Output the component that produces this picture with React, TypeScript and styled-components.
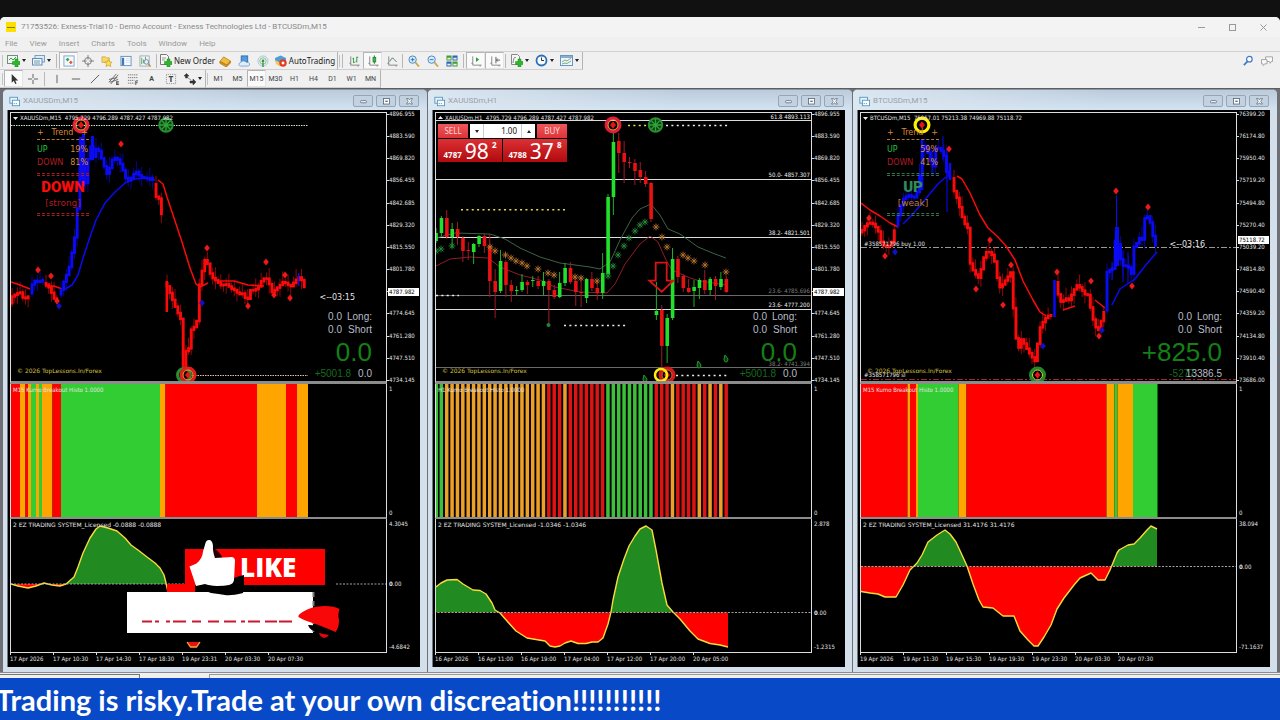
import React from 'react';
import styled, { createGlobalStyle, css } from 'styled-components';

const GlobalStyle = createGlobalStyle`
  * { box-sizing: border-box; }
  body { margin: 0; background: #111; }
  button, input { font: inherit; color: inherit; margin: 0; padding: 0; border: 0; background: none; }
`;

const ui = `"Noto Sans", "Open Sans", sans-serif`;
const caption = `Roboto, "Noto Sans", sans-serif`;
const chartFont = `"DejaVu Sans Condensed", "DejaVu Sans", sans-serif`;
const wide = `"DejaVu Sans", sans-serif`;
const arial = `"Liberation Sans", Arial, sans-serif`;

/* ---------- application shell ---------- */

const Page = styled.div`
  display: flex;
  flex-direction: column;
  min-height: 100vh;
  padding-top: 17px;
  background: #111;
  overflow: hidden;
`;

const AppWindow = styled.div`
  flex: 1;
  display: flex;
  flex-direction: column;
  background: #f0f0f0;
  border-radius: 5px 5px 0 0;
  font: 8px/12px ${ui};
  color: #222;
`;

const TitleBar = styled.header`
  display: flex;
  align-items: center;
  gap: 5px;
  height: 20px;
  padding: 0 12px 0 6px;
  background: #f3f3f3;
  border-radius: 5px 5px 0 0;
  color: #8a8a8a;
`;

const AppTitle = styled.h1`
  flex: 1;
  margin: 0;
  font: 8px/12px ${caption};
  white-space: nowrap;
`;

const AppLogo = styled.span`
  display: grid;
  place-items: center;
  width: 10px;
  height: 10px;
  background: #fbe000;
  &::after {
    content: '';
    width: 8px;
    height: 1px;
    background: #8f7a00;
  }
`;

const CaptionButtons = styled.div`
  display: flex;
  gap: 21px;
`;

const CaptionButton = styled.button`
  display: grid;
  place-items: center;
  width: 10px;
  height: 12px;
`;

const MenuBar = styled.nav`
  display: flex;
  gap: 12px;
  height: 15px;
  padding: 0 5px;
  border-bottom: 1px solid #d2d2d2;
  color: #999;
  font: 8px/14px ${caption};
  a { color: inherit; text-decoration: none; }
`;

const ToolRow = styled.div`
  display: flex;
  align-items: center;
  height: 18px;
  padding-right: 4px;
`;

const ToolGroup = styled.div`
  display: flex;
  align-items: center;
  height: 18px;
  padding-left: 4px;
  border-right: 1px solid #b4b4b4;
  border-bottom: 1px solid #cfcfcf;
  background: linear-gradient(#c4c4c4, #c4c4c4) 2px 3px / 1px 12px no-repeat;
  & + & { padding-left: 3px; background-position: 1px 3px; }
`;

const Spacer = styled.div`
  flex: 1;
`;

const Tool = styled.button<{ $w?: number; $on?: boolean }>`
  display: flex;
  flex: none;
  align-items: center;
  justify-content: center;
  gap: 2px;
  width: ${(p) => p.$w ?? 19}px;
  height: 17px;
  white-space: nowrap;
  ${(p) =>
    p.$on &&
    css`
      background: #fafafa;
      border: 1px solid #b4b4b4;
      border-right-color: #e4e4e4;
      border-bottom-color: #e4e4e4;
    `}
`;

const Period = styled(Tool)`
  font: 7px/12px ${caption};
  color: #444;
`;

const Divider = styled.span<{ $w?: number }>`
  flex: none;
  width: ${(p) => p.$w ?? 5}px;
  height: 14px;
  background: linear-gradient(#b8b8b8, #b8b8b8) center / 1px 100% no-repeat;
`;

const Caret = styled.span`
  border: 2px solid transparent;
  border-top: 3px solid #222;
  border-bottom: 0;
`;

/* ---------- chart windows ---------- */

const Workspace = styled.main`
  flex: 1;
  display: grid;
  grid-template-columns: repeat(3, minmax(0, 1fr));
  column-gap: 1px;
  padding: 0 3px;
  background: #6e7076;
  border-top: 1px solid #5a5d61;
`;

const ChartWindow = styled.section`
  display: flex;
  flex-direction: column;
  padding: 0 7px 5px 5px;
  background: #d3e0ec;
  border-top: 1px solid #8d979f;
  border-radius: 5px 5px 0 0;
`;

const ChartTitle = styled.header`
  display: flex;
  align-items: center;
  gap: 3px;
  height: 20px;
  margin: 0 -7px 0 -5px;
  padding: 2px 8px 0 6px;
  border-radius: 4px 4px 0 0;
  background: linear-gradient(90deg, #dbe7f1, rgba(219, 231, 241, 0) 60%), linear-gradient(#bccbdc, #d3e3f1);
  h2 {
    flex: 1;
    margin: 0;
    font: 8px/12px ${caption};
    color: #97a0a8;
  }
`;

const FrameButton = styled.button`
  display: grid;
  place-items: center;
  width: 20px;
  height: 12px;
  background: #c3d2e1;
  border: 1px solid #97a5b3;
  border-radius: 2px;
`;

const ChartBody = styled.div`
  flex: 1;
  display: grid;
  grid-template-columns: minmax(0, 1fr) 33px;
  grid-template-rows: 274fr 135fr 134fr 14px;
  min-height: 557px;
  padding-left: 2px;
  background: #000;
  color: #e4e4e4;
  font: 6px/8px ${chartFont};
  box-shadow: -1px 0 0 #6c7a86;
`;

const Plot = styled.div<{ $kind: 'price' | 'histo' | 'ez' }>`
  position: relative;
  min-height: 0;
  border-left: 1px solid #ddd;
  border-right: 1px solid #ddd;
  ${(p) => p.$kind === 'price' && 'margin-top: 2px; border-top: 1px solid #ddd; border-bottom: 3px solid #8c8c8c;'}
  ${(p) => p.$kind === 'histo' && 'border-bottom: 2px solid #8c8c8c;'}
  ${(p) => p.$kind === 'ez' && 'border-bottom: 1px solid #ddd;'}
`;

const Canvas = styled.svg`
  position: absolute;
  inset: 0;
  display: block;
  width: 100%;
  height: 100%;
`;

const Axis = styled.div<{ $low?: boolean }>`
  position: relative;
  display: flex;
  flex-direction: column;
  justify-content: space-between;
  padding: ${(p) => (p.$low ? '1px 0 2px 2px' : '0 0 0 2px')};
  white-space: nowrap;
`;

const Tick = styled.span`
  &::before {
    content: '';
    float: left;
    width: 2px;
    height: 1px;
    margin: 4px 0 0 -2px;
    background: #ddd;
  }
`;

const AxisMark = styled.span<{ $top: number; $boxed?: boolean }>`
  position: absolute;
  top: ${(p) => p.$top}px;
  left: 1px;
  padding: 0 1px;
  ${(p) => p.$boxed && 'background: #fff; color: #000; width: 31px;'}
`;

const Dates = styled.div`
  grid-column: 1 / -1;
  display: flex;
  padding-top: 1px;
`;

const DateLabel = styled.span`
  position: relative;
  flex: 0 0 43px;
  line-height: 10px;
  white-space: nowrap;
  &::before {
    content: '';
    position: absolute;
    left: 0;
    top: -1px;
    width: 1px;
    height: 2px;
    background: #ddd;
  }
`;

const QuoteCaption = styled.p`
  position: absolute;
  top: 1px;
  left: 9px;
  margin: 0;
  white-space: pre;
`;

const PlotCaption = styled.p<{ $wide?: boolean }>`
  position: absolute;
  top: 2px;
  left: 2px;
  margin: 0;
  white-space: pre;
  ${(p) => p.$wide && `font-family: ${wide};`}
`;

const Copyright = styled.p`
  position: absolute;
  left: 6px;
  bottom: 6px;
  margin: 0;
  font-family: ${wide};
  color: #d4c040;
`;

const Countdown = styled.p<{ $top: number }>`
  position: absolute;
  top: ${(p) => p.$top}px;
  right: 31px;
  margin: 0;
  font: 8px/10px ${wide};
`;

const OrderNote = styled.p<{ $top: number }>`
  position: absolute;
  left: 3px;
  top: ${(p) => p.$top}px;
  margin: 0;
`;

const LevelLabel = styled.p<{ $top: number; $dim?: boolean }>`
  position: absolute;
  right: 1px;
  top: ${(p) => p.$top}px;
  margin: 0;
  color: ${(p) => (p.$dim ? '#7d7d7d' : '#eee')};
`;

const Positions = styled.div`
  position: absolute;
  right: 14px;
  bottom: 2px;
  display: flex;
  flex-direction: column;
  align-items: flex-end;
  font: 10px/13px ${arial};
  color: #b9bcc8;
`;

const PositionRow = styled.div`
  display: flex;
  gap: 5px;
  white-space: nowrap;
  span + span { width: 25px; text-align: right; }
`;

const BigProfit = styled.strong`
  font: 26px/32px ${arial};
  color: #148014;
`;

const ProfitRow = styled.div`
  display: flex;
  gap: 7px;
  line-height: 11px;
`;

const SmallProfit = styled.span<{ $overlap?: boolean }>`
  color: #176b1f;
  ${(p) => p.$overlap && 'margin-right: -16px;'}
`;

/* ---------- trend panel ---------- */

const Trend = styled.div`
  position: absolute;
  left: 26px;
  top: 13px;
  width: 52px;
  display: flex;
  flex-direction: column;
  font: 8px/13px ${wide};
  color: #d98a35;
`;

const TrendRow = styled.div<{ $tone?: string }>`
  display: flex;
  justify-content: space-between;
  padding-right: 1px;
  b { font-weight: 400; color: ${(p) => p.$tone ?? 'inherit'}; }
`;

const Dashes = styled.div<{ $tone: string; $double?: boolean }>`
  height: ${(p) => (p.$double ? 3 : 1)}px;
  margin: ${(p) => (p.$double ? '4px 0 0' : '0 0 3px')};
  border: 1px dashed ${(p) => p.$tone};
  border-width: ${(p) => (p.$double ? '1px 0' : '1px 0 0')};
`;

const Verdict = styled.strong<{ $tone: string }>`
  padding-top: 1px;
  text-align: center;
  font: 900 15px/20px Roboto, ${chartFont};
  color: ${(p) => p.$tone};
`;

const Strength = styled.span<{ $tone: string }>`
  text-align: center;
  font-size: 9px;
  line-height: 12px;
  color: ${(p) => p.$tone};
`;

/* ---------- one-click trade panel ---------- */

const TradePanel = styled.form`
  position: absolute;
  left: 2px;
  top: 11px;
  width: 129px;
  display: grid;
  grid-template-columns: 1fr 1fr;
  gap: 1px;
  color: #fff;
`;

const TradeTop = styled.div`
  grid-column: 1 / -1;
  display: grid;
  grid-template-columns: 30px 1fr 30px;
  column-gap: 2px;
  height: 14px;
`;

const SideButton = styled.button`
  background: linear-gradient(#f0575a, #dd3438);
  font: 8px/14px ${ui};
  color: #fbd9d9;
`;

const Volume = styled.div`
  display: grid;
  grid-template-columns: 13px 1fr 13px;
  background: #fff;
  color: #111;
  button { display: grid; place-items: center; }
  input {
    min-width: 0;
    padding-right: 4px;
    text-align: right;
    font: 8px/12px ${ui};
    border: solid #ccc;
    border-width: 0 1px;
  }
`;

const UpCaret = styled(Caret)`
  border-top: 0;
  border-bottom: 3px solid #222;
`;

const Quote = styled.button`
  display: flex;
  justify-content: center;
  align-items: flex-end;
  gap: 3px;
  height: 23px;
  background: linear-gradient(#dd3034, #b00a0e);
  font: 700 8px/14px ${ui};
  big { font: 21px/22px ${ui}; }
  sup { align-self: flex-start; font: 700 8px/11px ${ui}; }
`;

/* ---------- like sticker ---------- */

const Sticker = styled.div`
  position: absolute;
  left: 116px;
  top: 19px;
  width: 220px;
`;

const LikeButton = styled.button`
  display: block;
  width: 140px;
  height: 36px;
  margin: 11px 0 0 58px;
  padding-left: 55px;
  background: #fe0000;
  color: #fff;
  text-align: left;
  font: 800 26px/36px "Open Sans", ${ui};
`;

const WhiteCard = styled.div`
  width: 186px;
  height: 41px;
  margin-top: 7px;
  background: #fff;
`;

const StickerArt = styled.svg`
  position: absolute;
  left: 0;
  top: 0;
  width: 220px;
  height: 110px;
`;

/* ---------- footer ---------- */

const TabStrip = styled.div`
  display: flex;
  align-items: flex-end;
  height: 6px;
  background: #f0f0f0;
  border-top: 1px solid #8a8d90;
  &::before, &::after {
    content: '';
    width: 139px;
    height: 3px;
    border: solid #777;
    border-width: 1px 1px 0 0;
  }
  &::after { flex: 1; border-width: 1px 0 0 1px; margin-left: 69px; border-color: #999; }
`;

const Banner = styled.footer`
  height: 42px;
  padding-top: 1px;
  overflow: hidden;
  background: #0849c8;
  color: #fff;
  font: 700 29px/42px Lato, sans-serif;
  font-variant-ligatures: none;
  white-space: nowrap;
  span { margin-left: -4px; }
`;

/* ---------- icons ---------- */

type IconName =
  | 'newChart' | 'profiles' | 'market' | 'cross' | 'navigator' | 'data' | 'tester' | 'order' | 'book' | 'vps'
  | 'signal' | 'auto' | 'bars' | 'candle' | 'line' | 'zoomIn' | 'zoomOut' | 'tile' | 'scroll' | 'shift'
  | 'indicator' | 'clock' | 'template' | 'search' | 'chat' | 'cursor' | 'plus' | 'vline' | 'hline' | 'trend'
  | 'channel' | 'fibo' | 'label' | 'arrows' | 'chartFile' | 'min' | 'max' | 'close';

const Plus = () => <path d="M8 5h3v2.500h2v3h-2V13H8v-2.500H5.500v-3H8z" fill="#2fb62f" stroke="#168a16" strokeWidth=".5" />;
const Axes = () => <path d="M3 1.500v9.500h9.500M1.500 9h1.500M11 12.500V11" fill="none" stroke="#777" strokeWidth=".9" />;

const shapes: Record<IconName, React.ReactNode> = {
  newChart: <><rect x=".5" y="1.500" width="10" height="8" fill="#eef6ee" stroke="#6f8f7c" /><path d="M2 6l2-2 2 2 3-3" stroke="#3c9a5a" fill="none" /><Plus /></>,
  profiles: <><rect x="3" y="1.500" width="9.500" height="6.500" fill="#dcebf8" stroke="#7ba0c0" /><rect x=".5" y="4.500" width="9.500" height="6.500" fill="#eef6fc" stroke="#5f8cb4" /><path d="M2 9h6M2 7h6" stroke="#79a" /></>,
  market: <><rect x="1" y="1" width="11" height="11" fill="#f4f9ff" stroke="#79a6cf" /><path d="M3 5l2-2 2 2-2 2z" fill="#2fa53a" /><path d="M6.500 8l2-2 2 2-2 2z" fill="#e3592b" /></>,
  cross: <><circle cx="6.500" cy="6.500" r="3.700" fill="none" stroke="#777" /><path d="M6.500 0v5M6.500 8v5M0 6.500h5M8 6.500h5" stroke="#777" /></>,
  navigator: <><path d="M1 2h4l1 1h3v5H1z" fill="#f5d86a" stroke="#c79c2c" strokeWidth=".7" /><path d="M8 5l1.300 2.500 2.700.3-2 1.900.6 2.800L8 11.200l-2.600 1.300.6-2.800-2-1.900 2.700-.3z" fill="#ffe04a" stroke="#c0962a" strokeWidth=".7" /></>,
  data: <><rect x="1" y="1.500" width="11" height="10" fill="#fff" stroke="#5c8fc2" /><path d="M2 3h2.500v8H2z" fill="#3c78b8" /><path d="M6 4h5M6 6h5M6 8h5" stroke="#bcd" strokeWidth=".7" /></>,
  tester: <><rect x="1" y="1" width="10" height="11" fill="#f3f8f3" stroke="#9ab" /><path d="M3 3v7M5 5v4M7 2v5" stroke="#4a9a63" /><circle cx="8" cy="7.500" r="2.500" fill="#dff0fb" stroke="#789" /><path d="M10 9.500l2.500 3" stroke="#b98a4a" strokeWidth="1.500" /></>,
  order: <><path d="M1.500.5h6l2 2v8h-8z" fill="#f7f7f7" stroke="#777" /><path d="M3 4h4M3 6h3" stroke="#999" /><Plus /></>,
  book: <><path d="M1 7l4-5 7.500 4.500-4 4.500z" fill="#f0bd3e" stroke="#b57f18" strokeWidth=".8" /><path d="M1 7v2l7 4 4.500-4.500v-2l-4 4.500z" fill="#d9982a" stroke="#a87212" strokeWidth=".8" /></>,
  vps: <><rect x="3.500" y="1" width="7" height="6.500" fill="#4e9be0" stroke="#2f6fb0" /><path d="M2.500 12q-1.500-.5-1.500-2t2-2q1.500-2 3.500-1.500T9 8q3-.5 3.500 1.500T11 12z" fill="#dfeefa" stroke="#6796c2" strokeWidth=".8" /></>,
  signal: <><circle cx="6.500" cy="6.500" r="1.500" fill="#2e9a40" /><circle cx="6.500" cy="6.500" r="3.500" fill="none" stroke="#7cc08a" /><circle cx="6.500" cy="6.500" r="5.500" fill="none" stroke="#a9c6d8" /><path d="M6.500 8v5" stroke="#2e9a40" strokeWidth="1.500" /></>,
  auto: <><path d="M1 4l5.500-2.500L12 4v3L6.500 10 1 7z" fill="#4f9ed8" /><path d="M1 6l5 2.500v4L2 10z" fill="#f0c75a" /><circle cx="9" cy="9" r="3.700" fill="#e03a20" /><rect x="7.700" y="7.700" width="2.600" height="2.600" fill="#fff" /></>,
  bars: <><Axes /><path d="M6 3v5.500M9.500 2v6M9.500 2.500h1.500M6 8h1.500M4.800 4H6M8.300 7h1.200" stroke="#2a9c3a" /></>,
  candle: <><Axes /><path d="M8 .5v9" stroke="#1b7a2a" /><rect x="6.500" y="2.500" width="3" height="5" fill="#35c24a" stroke="#1b7a2a" strokeWidth=".8" /></>,
  line: <><Axes /><path d="M4 7q3-6 5-2l2.500 2.500" stroke="#4a7a5a" fill="none" /></>,
  zoomIn: <><circle cx="5" cy="5" r="4" fill="#d7ecfb" stroke="#3f84c0" /><path d="M3 5h4M5 3v4" stroke="#2a72b8" /><path d="M8 8l4 4.500" stroke="#d0a848" strokeWidth="2" /></>,
  zoomOut: <><circle cx="5" cy="5" r="4" fill="#d7ecfb" stroke="#3f84c0" /><path d="M3 5h4" stroke="#2a72b8" /><path d="M8 8l4 4.500" stroke="#d0a848" strokeWidth="2" /></>,
  tile: <><path d="M.5.5H6V6H.5zM7 7h5.500v5.500H7z" fill="#3f9e34" /><path d="M7 .5h5.500V6H7zM.5 7H6v5.500H.5z" fill="#3567ae" /><path d="M1.500 4H5M8 4h3.500M1.500 10.500H5M8 10.500h3.500" stroke="#e8f2e8" strokeWidth="1.800" /></>,
  scroll: <><Axes /><path d="M6.500 2.500l3.500 2.500-3.500 2.500z" fill="#2aa53a" /></>,
  shift: <><Axes /><path d="M7.500 2v7M12 5.500H8M9.500 4L8 5.500 9.500 7" stroke="#555" fill="none" /></>,
  indicator: <><path d="M1.500.5h6l2 2v8h-8z" fill="#f7f7f7" stroke="#888" /><path d="M3 9c1-7 2-6 3-5" stroke="#777" fill="none" /><Plus /></>,
  clock: <><circle cx="6.500" cy="6.500" r="5" fill="#f4faff" stroke="#2d6fb5" strokeWidth="1.800" /><path d="M6.500 3.500v3h2.500" stroke="#333" fill="none" /></>,
  template: <><rect x=".5" y="1.500" width="12" height="10" fill="#eef5fb" stroke="#6a95bf" /><path d="M1 3h11" stroke="#6a95bf" strokeWidth="1.500" /><path d="M2 8l3-2 2 1 4-3M2 10l3-1 2 .5L11 7" stroke="#5a9a6a" fill="none" strokeWidth=".8" /></>,
  search: <><circle cx="8" cy="4.500" r="3" fill="#fff" stroke="#4177c4" strokeWidth="1.300" /><path d="M6 7l-4 4" stroke="#4177c4" strokeWidth="1.800" /></>,
  chat: <><path d="M5 2h7.500v5H11l-1 2-1-2H5z" fill="#fafafa" stroke="#a0a0a0" /><path d="M.5 5h6v4.500H4L2.500 11.500 2 9.500H.5z" fill="#fafafa" stroke="#a0a0a0" /></>,
  cursor: <path d="M4 1v9.500l2.300-2 1.500 3.500 1.500-.7-1.500-3.300H11z" fill="#333" />,
  plus: <path d="M6.500 1v4.500M6.500 7.500V12M1 6.500h4.500M7.500 6.500H12" stroke="#555" />,
  vline: <path d="M6.500 2v9" stroke="#555" />,
  hline: <path d="M2 6.500h9" stroke="#555" />,
  trend: <path d="M2 11l9-9" stroke="#555" />,
  channel: <><path d="M1 10L9 1M3 12l8-10M1 7l9-2M2 10l9-3" stroke="#555" strokeWidth=".9" /><path d="M9 9.500h3M9 11h2.500M9 12.500h3M9.500 9v4" stroke="#333" strokeWidth=".8" /></>,
  fibo: <><path d="M1 2h11M1 5h11M1 8h7M1 11h7" stroke="#777" strokeDasharray="1.500 .7" /><path d="M9.500 13V8.500H12M9.500 10.500h2" stroke="#333" fill="none" strokeWidth=".8" /></>,
  label: <rect x="1.500" y="1.500" width="10" height="10" fill="none" stroke="#888" strokeDasharray="1 1" />,
  arrows: <path d="M1 4l2.500-2.500L6 4H4.500v2h-2V4zM7 9h3V7l3 3-3 3v-2H7zM5 6l3 2" fill="#333" stroke="#333" strokeWidth=".5" />,
  chartFile: <><rect x="1" y="1.500" width="9" height="7" fill="#e8f2fa" stroke="#4f93bd" /><rect x="4" y="5" width="8.500" height="6.500" fill="#fff" stroke="#4f93bd" /><path d="M5.500 9h5" stroke="#4f93bd" strokeDasharray="1.500 1" /></>,
  min: <rect x="3" y="5.500" width="7" height="2.500" rx="1" fill="#fff" stroke="#5b6b7b" />,
  max: <><rect x="3" y="3" width="7" height="6.500" fill="#fff" stroke="#5b6b7b" /><rect x="5" y="5.500" width="3" height="1.500" fill="#5b6b7b" /></>,
  close: <path d="M3 3h2.300L6.500 4.700 7.700 3H10L8 6.300 10 9.500H7.700L6.500 7.900 5.300 9.500H3L5 6.300z" fill="#fff" stroke="#5b6b7b" strokeWidth=".9" />,
};

const Icon = ({ name, size = 12 }: { name: IconName; size?: number }) => (
  <svg width={size} height={size} viewBox="0 0 13 13" aria-hidden="true">{shapes[name]}</svg>
);

/* ---------- chart drawing ---------- */

type Pt = [number, number];
const BLUE = '#0a0af5';
const RED = '#fa0a0a';
const BAR = 2.69;

const toPath = (pts: Pt[]) => 'M' + pts.map((p) => p.join(' ')).join('L');

const yAt = (pts: Pt[], x: number) => {
  const i = pts.findIndex((p) => p[0] >= x);
  if (i <= 0) return i === 0 ? pts[0][1] : pts[pts.length - 1][1];
  const [x0, y0] = pts[i - 1];
  const [x1, y1] = pts[i];
  return y0 + ((y1 - y0) * (x - x0)) / (x1 - x0 || 1);
};

const DenseBars = ({ pts, color }: { pts: Pt[]; color: string }) => {
  const bars: React.ReactNode[] = [];
  const end = pts[pts.length - 1][0];
  for (let x = pts[0][0], i = 0; x <= end; x += BAR, i += 1) {
    const a = yAt(pts, x - BAR / 2);
    const b = yAt(pts, x + BAR / 2);
    const top = Math.min(a, b) - 1;
    const bottom = Math.max(a, b) + 1.5;
    const up = ((i * 7 + 3) % 5) * 2.4;
    const down = ((i * 5 + 1) % 4) * 2.6;
    bars.push(
      <g key={i}>
        <path d={`M${x} ${top - up}V${bottom + down}`} stroke={color} strokeWidth=".8" opacity=".75" />
        <rect x={x - 1.4} y={top} width="2.9" height={bottom - top} fill={color} />
      </g>,
    );
  }
  return <>{bars}</>;
};

const Average = ({ pts, color }: { pts: Pt[]; color: string }) => (
  <path d={toPath(pts)} fill="none" stroke={color} strokeWidth="1.500" strokeLinejoin="round" />
);

const Diamonds = ({ at, color }: { at: Pt[]; color: string }) => (
  <>{at.map(([x, y]) => <path key={`${x}-${y}`} d={`M${x} ${y - 3.5}l2.800 3.500-2.800 3.500-2.800-3.500z`} fill={color} />)}</>
);

const Target = ({ x, y, ring, inner }: { x: number; y: number; ring: string; inner?: string }) => (
  <g>
    <circle cx={x} cy={y} r="6.900" fill="none" stroke={ring} strokeWidth="3.200" />
    {inner && <circle cx={x} cy={y} r="5" fill="none" stroke={inner} strokeWidth="1" />}
    <path d={`M${x} ${y - 3.8}l3 3.800-3 3.800-3-3.800z`} fill="#e01818" />
  </g>
);

const GreenSeal = ({ x, y }: { x: number; y: number }) => (
  <g>
    <circle cx={x} cy={y} r="6.700" fill="#0d3d10" stroke="#259030" strokeWidth="2" />
    <path d={`M${x} ${y - 6}V${y + 6}M${x - 6} ${y}H${x + 6}M${x - 4} ${y - 4}L${x + 4} ${y + 4}M${x + 4} ${y - 4}L${x - 4} ${y + 4}`} stroke="#2fa23a" strokeWidth="1.300" />
  </g>
);

const goldPrice = (
  <>
    <path d="M11 125.500H308" stroke="#bfe8c8" strokeDasharray="1.500 1" />
    <path d="M190 375.500H308" stroke="#e8c0a0" strokeDasharray="1.500 1" />
    <Average color={RED} pts={[[11, 282], [20, 285], [30, 289]]} />
    <Average color={RED} pts={[[45, 286], [54, 286], [62, 289]]} />
    <Average color={BLUE} pts={[[65, 289], [72, 285], [78, 275], [84, 255], [90, 237], [96, 220], [105, 203], [115, 192], [125, 183], [135, 179], [145, 178], [155, 180]]} />
    <Average color={RED} pts={[[158, 180], [163, 184], [167, 197], [174, 218], [182, 242], [190, 268], [196, 284], [200, 287], [208, 283]]} />
    <Average color={RED} pts={[[218, 281], [234, 281], [248, 285], [264, 286]]} />
    <DenseBars color={RED} pts={[[12, 303], [14, 293], [18, 296], [20, 288], [23, 297], [27, 298], [30, 296]]} />
    <DenseBars color={BLUE} pts={[[32, 293], [34, 280], [40, 282], [43, 280]]} />
    <DenseBars color={RED} pts={[[46, 283], [50, 287], [54, 295], [57, 302], [59, 299]]} />
    <DenseBars color={BLUE} pts={[[61, 294], [64, 284], [68, 274], [72, 262], [74, 245], [77, 232], [79, 200], [80.5, 190], [82, 140], [84, 165], [86, 188], [89, 160], [92, 146], [95, 158], [98, 146], [101, 153], [105, 165], [109, 176], [112, 162], [115, 157], [120, 160], [125, 172], [128, 181], [132, 178], [137, 171], [142, 177], [148, 178], [152, 180], [155, 176]]} />
    <path d="M80.500 137V188M83.500 134V186M92.500 136V160" stroke={BLUE} strokeWidth="3" />
    <DenseBars color={RED} pts={[[156, 184], [156.5, 196], [160, 198], [161, 208], [164, 218]]} />
    <path d="M166.800 281V312" stroke={RED} strokeWidth="2.500" />
    <DenseBars color={RED} pts={[[167, 283], [170, 290], [175, 303], [180, 315], [182.5, 320], [184, 370], [186, 352], [190, 348], [192, 330], [197, 325], [199, 316], [200.5, 285], [203, 272], [206, 260], [208, 260], [210, 270], [213, 277], [218, 281], [222, 285], [228, 284], [232, 288], [236, 290], [240, 294], [245, 293], [248, 303], [251, 290], [256, 290], [260, 286], [263, 280], [267, 277], [270, 282], [273, 292], [277, 289], [281, 285], [285, 281], [288, 284], [292, 286], [296, 281], [300, 277], [303, 280], [306, 288]]} />
    <path d="M298.500 273V286" stroke={BLUE} strokeWidth="1.500" />
    <Diamonds color="#f01818" at={[[38, 270], [51, 276], [57, 301], [121, 144], [207, 248], [266, 262], [285, 275], [248, 306], [274, 295], [290, 298]]} />
    <Diamonds color="#1010c8" at={[[59, 306], [202, 303]]} />
    <Target x={81} y={125} ring="#e8203c" inner="#ffb030" />
    <GreenSeal x={166} y={125} />
    <circle cx="184" cy="375" r="6.500" fill="none" stroke="#259030" strokeWidth="3" />
    <Target x={188} y={375} ring="#e01c1c" inner="#ff9a30" />
  </>
);

const bitcoinPrice = (
  <>
    <path d="M861 247.500H1236" stroke="#8f9a90" strokeDasharray="6 2 2 2" />
    <path d="M861 379.500H1236" stroke="#a02838" strokeDasharray="6 2 2 2" />
    <Average color={RED} pts={[[861, 203], [870, 210], [880, 216], [890, 223], [898, 227]]} />
    <Average color={BLUE} pts={[[903, 224], [910, 217], [918, 208], [928, 196], [938, 184], [946, 177]]} />
    <Average color={RED} pts={[[957, 176], [962, 179], [970, 193], [980, 215], [988, 228], [997, 236], [1006, 246], [1015, 260], [1023, 281], [1033, 300], [1040, 312], [1046, 316]]} />
    <Average color={RED} pts={[[1063, 310], [1075, 306]]} />
    <Average color={RED} pts={[[1095, 300], [1105, 308]]} />
    <Average color={BLUE} pts={[[1112, 305], [1120, 289], [1135, 279], [1145, 266], [1157, 252]]} />
    <DenseBars color={RED} pts={[[862, 232], [866, 226], [870, 222], [875, 224], [880, 232], [883, 245], [890, 246], [894, 240], [896, 228]]} />
    <DenseBars color={BLUE} pts={[[898, 225], [900, 210], [903, 203], [905, 198], [908, 196], [911, 195], [915, 198], [919, 190], [922, 165], [923, 150], [926, 145], [930, 155], [934, 168], [937, 148], [941, 148], [945, 155], [947, 170], [950, 176]]} />
    <path d="M950 163V180M922 140V190" stroke={BLUE} strokeWidth="2.500" />
    <path d="M947 150V212M943 136V160M932 150V176" stroke={BLUE} />
    <DenseBars color={RED} pts={[[954, 178], [955, 190], [959, 200], [962, 212], [965, 222], [969, 228], [971, 262], [975, 272], [980, 278], [984, 262], [986, 252], [992, 252], [996, 262], [1000, 288], [1004, 284], [1008, 278], [1012, 272], [1014, 300], [1016, 330], [1019, 350], [1023, 338], [1026, 345], [1030, 352], [1034, 358], [1037, 362], [1040, 330], [1044, 322], [1048, 316], [1052, 315]]} />
    <path d="M1054.500 280V317" stroke={BLUE} strokeWidth="2.500" />
    <DenseBars color={RED} pts={[[1058, 282], [1060, 300], [1063, 302], [1067, 298], [1070, 300], [1075, 290], [1078, 285], [1082, 288], [1086, 294], [1090, 295], [1092, 310], [1095, 322], [1099, 332], [1102, 322], [1105, 312]]} />
    <DenseBars color={BLUE} pts={[[1107, 310], [1108, 272], [1112, 269], [1115, 268], [1117, 230], [1120, 250], [1123, 265], [1128, 266], [1131, 268], [1133, 275], [1134, 248], [1138, 243], [1141, 237], [1144, 240], [1146, 218], [1148, 215], [1151, 220], [1153, 232], [1157, 246]]} />
    <path d="M1116.500 195V230M1112 262V280M1123 250V282M1128 252V284" stroke={BLUE} />
    <path d="M1117 227V266" stroke={BLUE} strokeWidth="4" />
    <Diamonds color="#f01818" at={[[869, 218], [885, 256], [949, 149], [990, 240], [1011, 265], [976, 289], [1003, 305], [1057, 272], [1091, 281], [1116, 191], [1148, 207], [1132, 286], [1099, 336]]} />
    <Diamonds color="#1010c8" at={[[895, 252], [1043, 346], [1102, 330]]} />
    <Target x={922} y={125} ring="#ffee00" />
    <Target x={1037.500} y={375} ring="#1f8a28" inner="#d8d040" />
  </>
);

// [high, body top, body bottom, low, rising]
const hourly: [number, number, number, number, 0 | 1][] = [
  [228, 233, 241, 243, 1], [216, 218, 233, 236, 1], [210, 218, 237, 239, 0], [223, 229, 237, 248, 1], [222, 229, 237, 245, 0],
  [236, 238, 251, 262, 0], [242, 250, 251, 260, 0], [243, 244, 252, 264, 1], [235, 236, 244, 247, 1], [234, 236, 246, 253, 0],
  [234, 246, 281, 297, 0], [269, 281, 292, 318, 0], [250, 261, 291, 293, 1], [260, 262, 285, 297, 0], [280, 285, 291, 302, 0],
  [286, 290, 291, 295, 1], [274, 282, 290, 292, 1], [280, 282, 285, 294, 0], [276, 280, 281, 287, 1], [276, 281, 286, 289, 0],
  [272, 281, 286, 295, 1], [279, 281, 290, 323, 0], [285, 290, 297, 299, 0], [272, 283, 297, 298, 1], [263, 268, 283, 286, 1],
  [262, 268, 282, 284, 0], [277, 281, 292, 306, 0], [277, 292, 293, 307, 0], [278, 279, 298, 303, 1], [272, 279, 288, 291, 0],
  [282, 288, 293, 300, 0], [253, 273, 293, 299, 1], [194, 197, 274, 276, 1], [131, 142, 197, 215, 1], [133, 141, 153, 173, 0],
  [141, 153, 162, 183, 0], [157, 162, 163, 168, 0], [159, 163, 171, 185, 0], [162, 170, 177, 183, 0], [171, 177, 184, 187, 0],
  [182, 183, 219, 222, 0], [282, 311, 315, 320, 1], [305, 310, 346, 372, 0], [314, 318, 346, 363, 1], [248, 259, 318, 320, 1],
  [256, 259, 277, 283, 0], [274, 276, 288, 292, 0], [279, 288, 292, 293, 0], [280, 287, 291, 307, 1], [278, 280, 288, 299, 1],
  [270, 280, 290, 294, 0], [277, 279, 290, 295, 1], [276, 279, 286, 300, 0], [272, 279, 287, 290, 1], [276, 279, 292, 293, 0],
];
const HOUR = 5.375;

const Stars = ({ at, color }: { at: Pt[]; color: string }) => (
  <>
    {at.map(([x, y]) => (
      <path key={x} d={`M${x} ${y - 3.4}v6.800M${x - 3.4} ${y}h6.800M${x - 2.4} ${y - 2.4}l4.800 4.800M${x + 2.4} ${y - 2.4}l-4.800 4.800`} stroke={color} strokeWidth=".9" />
    ))}
  </>
);

const goldHourlyPrice = (
  <>
    <path d="M436 120.500H811M436 179.500H811M436 237.500H811M436 309.500H811" stroke="#dcdcdc" />
    <path d="M436 295.500H811M436 367.500H811" stroke="#6a6a6a" />
    <g strokeWidth="1.500">
      <path d="M461 209.700H566M628 125.500H650" stroke="#e8e050" strokeDasharray="2 3.370" />
      <path d="M436 295.500H459M564 325.500H626M666 125.500H728M676 375.500H728" stroke="#eee" strokeDasharray="2 3.370" />
    </g>
    <path d="M436 238L455 233L490 234L505 239L520 248L540 257L560 263L590 267L600 269L610 262L620 240L632 218L640 209L651 204L660 215L668 229L680 234L698 247L715 254L726 258" fill="none" stroke="#3d6347" />
    <path d="M436 266L450 259L470 257L488 258L500 267L520 275L540 280L555 287L580 292L607 293L615 284L625 264L640 244L650 236L658 242L666 260L672 270L690 278L700 281L726 285" fill="none" stroke="#8f1c2a" />
    {hourly.map(([high, top, bottom, low, rising], i) => {
      const x = 436 + i * HOUR;
      return (
        <g key={i}>
          <path d={`M${x} ${high}V${low}`} stroke={rising ? '#1fae2c' : '#a01828'} />
          <rect x={x - 1.7} y={top} width="3.600" height={bottom - top} fill={rising ? '#22e02c' : '#e81212'} />
        </g>
      );
    })}
    <Stars color="#b8732a" at={[[490, 247], [495, 251], [505.5, 255], [511, 258], [516, 261], [522, 263], [527, 266], [538, 269], [548, 273], [554, 275], [575, 277], [581, 278], [597, 281], [656, 227], [662, 237], [667, 247], [683, 255], [688, 258], [694, 261], [705, 265], [726, 272]]} />
    <Stars color="#258a38" at={[[436, 251], [441, 249], [452, 246], [608, 276], [613, 266], [618, 255], [624, 246], [629, 238], [635, 231], [640, 225], [645, 222]]} />
    <circle cx="548.500" cy="325" r="2" fill="#1f8a35" />
    <path d="M655.700 262.700h11v18h6.600l-11.600 11-12.400-11h6.400z" fill="none" stroke="#d81414" strokeWidth="1.800" />
    {[[699, 365], [726, 359], [645, 379]].map(([x, y]) => (
      <path key={x} d={`M${x - 1} ${y - 4}l3 4q0 3-2 3t-2-3z`} fill="#0a3a10" stroke="#1f9a30" />
    ))}
    <Target x={613} y={125} ring="#e01c3c" inner="#ffb030" />
    <GreenSeal x={655.500} y={125} />
    <Target x={667} y={375} ring="#d81818" inner="#e06a30" />
    <circle cx="661" cy="375" r="6" fill="none" stroke="#ffee10" strokeWidth="2.500" />
  </>
);

const tones = { r: '#fe0000', o: '#ffa500', g: '#32cd32' } as const;
type Tone = keyof typeof tones;

const Blocks = ({ from, runs }: { from: number; runs: [Tone, number][] }) => (
  <>
    {runs.map(([tone, end], i) => {
      const start = i ? runs[i - 1][1] : from;
      return <rect key={end} x={start} y="384" width={end - start} height="133" fill={tones[tone]} />;
    })}
  </>
);

const hourlyTones = 'gg' + 'o'.repeat(19) + 'rrr' + 'o' + 'r'.repeat(7) + 'g'.repeat(9) + 'rrr' + 'o' + 'rrrr' + 'ororor';
const softTones: Record<string, string> = { r: '#dc1414', o: '#eda028', g: '#3cc03c' };

const HourlyBlocks = () => (
  <>
    {hourlyTones.split('').map((tone, i) => (
      <rect key={i} x={i ? 434.2 + i * HOUR : 436} y="384" width={i ? 3.5 : 2} height="133" fill={softTones[tone]} />
    ))}
  </>
);

const Oscillator = ({ id, pts, zero }: { id: string; pts: Pt[]; zero: number }) => {
  const area = `${toPath(pts)}V${zero}H${pts[0][0]}Z`;
  return (
    <>
      <defs>
        <clipPath id={`${id}-up`}><rect x="0" y="0" width="1300" height={zero} /></clipPath>
        <clipPath id={`${id}-down`}><rect x="0" y={zero} width="1300" height="300" /></clipPath>
      </defs>
      <path d={area} fill="#218a21" clipPath={`url(#${id}-up)`} />
      <path d={area} fill="#fe0000" clipPath={`url(#${id}-down)`} />
      <path d={toPath(pts)} fill="none" stroke="#f7dc3c" strokeWidth="1.400" strokeLinejoin="round" />
      <path d={`M0 ${zero}H1300`} stroke="#b4b4b4" strokeDasharray="2 1.500" strokeWidth=".9" />
    </>
  );
};

const goldWave: Pt[] = [[11, 584], [18, 586], [28, 588], [36, 586], [44, 583], [52, 585], [60, 586], [66, 584], [74, 577], [78, 567], [83, 553], [90, 538], [96, 529], [100, 526], [108, 528], [117, 531], [125, 538], [131, 545], [138, 550], [147, 557], [155, 563], [160, 568], [164, 575], [166, 583], [168, 592]];
const hourlyWave: Pt[] = [[436, 587], [441, 583], [447, 580], [457, 579.5], [463, 584], [473, 590], [480, 590.5], [486, 594], [492, 603], [495, 610], [500, 613], [507, 621], [516, 631], [527, 638], [545, 641], [550, 646], [555, 647], [560, 646], [565, 643], [571, 641], [578, 643.5], [586, 643.5], [592, 642], [598, 642], [603, 638], [608, 624], [611, 612], [613, 600], [618, 577], [624, 559], [629, 546], [635, 536], [640, 529], [646, 526], [652, 530], [656, 550], [662, 583], [667, 605], [673, 612], [680, 619], [690, 631], [698, 639], [710, 643.5], [720, 645], [728, 647]];
const bitcoinWave: Pt[] = [[861, 591.5], [870, 593], [878, 594], [885, 597], [896, 597], [903, 585], [910, 570], [917, 563], [922, 555], [928, 542], [937, 535], [945, 530], [950, 534], [956, 542], [962, 555], [967, 566], [973, 584], [979, 600], [983, 607], [993, 608], [1003, 616], [1014, 616], [1020, 631], [1028, 640], [1034, 646], [1038, 646], [1044, 637], [1051, 625], [1057, 609], [1064, 598], [1074, 585], [1080, 578], [1091, 573], [1098, 580], [1105, 580], [1110, 570], [1117, 553], [1119, 550], [1128, 545], [1134, 544], [1140, 538], [1147, 530], [1151, 526], [1157, 529]];

const goldPrices = ['4896.955', '4883.590', '4869.820', '4856.455', '4842.685', '4829.320', '4815.550', '4801.780', '', '4774.645', '4761.280', '4747.510', '4734.145'];

interface ChartProps {
  title: string;
  quote: string;
  folded?: boolean;
  left: number;
  prices: string[];
  last: string;
  lastTop: number;
  price: React.ReactNode;
  priceExtras: React.ReactNode;
  profit: string;
  pips: string;
  total: string;
  pipsOverlap?: boolean;
  histoName: string;
  histo: React.ReactNode;
  values: string;
  wave: React.ReactNode;
  waveExtras?: React.ReactNode;
  top: string;
  bottom: string;
  zeroTop: number;
  dates: string[];
}

const Chart = (c: ChartProps) => (
  <ChartWindow>
    <ChartTitle>
      <Icon name="chartFile" size={11} />
      <h2>{c.title}</h2>
      <FrameButton aria-label="Minimize chart"><Icon name="min" size={11} /></FrameButton>
      <FrameButton aria-label="Maximize chart"><Icon name="max" size={11} /></FrameButton>
      <FrameButton aria-label="Close chart"><Icon name="close" size={11} /></FrameButton>
    </ChartTitle>
    <ChartBody>
      <Plot $kind="price">
        <Canvas viewBox={`${c.left} 113 375 268`} preserveAspectRatio="none">
          {c.price}
          <path d={c.folded ? `M${c.left + 2} 119h5l-2.500-3z` : `M${c.left + 2} 117h5l-2.500 3z`} fill="#eee" />
        </Canvas>
        <QuoteCaption>{c.quote}</QuoteCaption>
        <Copyright>© 2026 TopLessons.In/Forex</Copyright>
        <Positions>
          <PositionRow><span>0.0</span><span>Long:</span></PositionRow>
          <PositionRow><span>0.0</span><span>Short</span></PositionRow>
          <BigProfit>{c.profit}</BigProfit>
          <ProfitRow><SmallProfit $overlap={c.pipsOverlap}>{c.pips}</SmallProfit><span>{c.total}</span></ProfitRow>
        </Positions>
        {c.priceExtras}
      </Plot>
      <Axis>
        {c.prices.map((p, i) => <Tick key={i}>{p || '\u00a0'}</Tick>)}
        <AxisMark $top={c.lastTop} $boxed>{c.last}</AxisMark>
      </Axis>
      <Plot $kind="histo">
        <Canvas viewBox={`${c.left} 384 375 133`} preserveAspectRatio="none">{c.histo}</Canvas>
        <PlotCaption>{c.histoName} Kumo Breakout Histo 1.0000</PlotCaption>
      </Plot>
      <Axis $low><span>1</span><span>0</span></Axis>
      <Plot $kind="ez">
        <Canvas viewBox={`${c.left} 519 375 133`} preserveAspectRatio="none">{c.wave}</Canvas>
        <PlotCaption $wide>2 EZ TRADING SYSTEM_Licensed {c.values}</PlotCaption>
        {c.waveExtras}
      </Plot>
      <Axis $low>
        <span>{c.top}</span>
        <AxisMark $top={c.zeroTop}><b>0</b>.00</AxisMark>
        <span>{c.bottom}</span>
      </Axis>
      <Dates>{c.dates.map((d) => <DateLabel key={d}>{d}</DateLabel>)}</Dates>
    </ChartBody>
  </ChartWindow>
);

interface TrendProps {
  up: string;
  down: string;
  verdict: string;
  strength: string;
  tone: string;
  strengthTone: string;
  dashTone: string;
}

const TrendPanel = (t: TrendProps) => (
  <Trend>
    <TrendRow><span>+</span><span>Trend</span><span>+</span></TrendRow>
    <Dashes $tone="#b87830" />
    <TrendRow $tone="#22c040"><b>UP</b><span>{t.up}</span></TrendRow>
    <TrendRow $tone="#b01c24"><b>DOWN</b><span>{t.down}</span></TrendRow>
    <Dashes $tone={t.dashTone} $double />
    <Verdict $tone={t.tone}>{t.verdict}</Verdict>
    <Strength $tone={t.strengthTone}>{t.strength}</Strength>
    <Dashes $tone={t.dashTone} $double />
  </Trend>
);

const LikeSticker = () => (
  <Sticker>
    <LikeButton>LIKE</LikeButton>
    <WhiteCard />
    <StickerArt viewBox="127 538 220 110" aria-hidden="true">
      <path d="M195 585l25-3 20-6 4-1v12l-1 6q-12 3-18 2t-14-2l-8-3-8-1z" fill="#000" />
      <path d="M212 548q8 2 11 12l-10 4z" fill="#200" />
      <path d="M205.500 543q1-3.500 4-3t3.500 6q-.5 5 2 12l17-1q3 .5 3 4l-1 19q-.5 4-5 5t-12 1q-8-.5-12-2l-9 2-6.500-19.500 7-3q6-5 6.500-12z" fill="#fff" />
      <path d="M325 583h10v2h-10z" fill="#000" />
      <path d="M313.500 592v40" stroke="#777" strokeWidth="2" strokeDasharray="5 4" />
      <path d="M142 621.500h10M155 621.500h4M166 621.500h4M173 621.500h13M192 621.500h9M208 621.500h11M224 621.500h12M241 621.500h4M248 621.500h12M265 621.500h12M279 621.500h13" stroke="#c81830" strokeWidth="1.800" />
      <path d="M308 625q2 6 10 7l18 2-6-8z" fill="#000" />
      <path d="M298.500 617q-1-2 4-5 9-6 22-6 10 0 15 3-2 6-.5 11 0 8-3.500 12-14-6-20-8-13-4-17-7z" fill="#f80808" />
      <path d="M319 633q5 1 10 2-2 3-5 3-4-1-5-5z" fill="#e00808" />
    </StickerArt>
  </Sticker>
);

const tool = (name: IconName, label: string, on = false) => (
  <Tool key={label} aria-label={label} $on={on}><Icon name={name} /></Tool>
);

const dropTool = (name: IconName, label: string) => (
  <Tool key={label} aria-label={label} $w={25}><Icon name={name} size={13} /><Caret /></Tool>
);

export default function App() {
  return (
    <Page>
      <GlobalStyle />
      <AppWindow>
        <TitleBar>
          <AppLogo />
          <AppTitle>71753526: Exness-Trial10 - Demo Account - Exness Technologies Ltd - BTCUSDm,M15</AppTitle>
          <CaptionButtons>
            <CaptionButton aria-label="Minimize"><svg width="7" height="7"><path d="M0 3.500h7" stroke="#999" /></svg></CaptionButton>
            <CaptionButton aria-label="Restore"><svg width="7" height="7"><rect x=".5" y=".5" width="6" height="6" fill="none" stroke="#999" /></svg></CaptionButton>
            <CaptionButton aria-label="Close"><svg width="7" height="7"><path d="M.5.5l6 6M6.500.5l-6 6" stroke="#999" /></svg></CaptionButton>
          </CaptionButtons>
        </TitleBar>
        <MenuBar>
          {['File', 'View', 'Insert', 'Charts', 'Tools', 'Window', 'Help'].map((m) => <a key={m} href={`#${m.toLowerCase()}`}>{m}</a>)}
        </MenuBar>
        <ToolRow>
          <ToolGroup>
            {dropTool('newChart', 'New chart')}
            {dropTool('profiles', 'Profiles')}
            <Divider />
            {tool('market', 'Market watch', true)}
            {tool('cross', 'Data window')}
            {tool('navigator', 'Navigator')}
            {tool('data', 'Terminal')}
            {tool('tester', 'Strategy tester')}
            <Divider />
            <Tool $w={56}><Icon name="order" size={13} />New Order</Tool>
            {tool('book', 'MetaEditor')}
            {tool('vps', 'Virtual hosting')}
            {tool('signal', 'Signals')}
            <Tool $w={65}><Icon name="auto" size={13} />AutoTrading</Tool>
          </ToolGroup>
          <ToolGroup>
            <Divider $w={3} />
            {tool('bars', 'Bar chart')}
            {tool('candle', 'Candlesticks', true)}
            {tool('line', 'Line chart')}
            <Divider $w={3} />
            {tool('zoomIn', 'Zoom in')}
            {tool('zoomOut', 'Zoom out')}
            {tool('tile', 'Tile windows')}
            <Divider />
            {tool('scroll', 'Auto scroll', true)}
            {tool('shift', 'Chart shift', true)}
            <Divider $w={3} />
            {dropTool('indicator', 'Indicators')}
            {dropTool('clock', 'Periods')}
            {dropTool('template', 'Templates')}
          </ToolGroup>
          <Spacer />
          {tool('search', 'Search')}
          {tool('chat', 'Chat')}
        </ToolRow>
        <ToolRow>
          <ToolGroup>
            {tool('cursor', 'Cursor', true)}
            {tool('plus', 'Crosshair')}
            <Divider />
            {tool('vline', 'Vertical line')}
            {tool('hline', 'Horizontal line')}
            {tool('trend', 'Trend line')}
            {tool('channel', 'Channel')}
            {tool('fibo', 'Fibonacci')}
            <Period aria-label="Text"><b>A</b></Period>
            <Period aria-label="Text label"><svg width="12" height="12" viewBox="0 0 13 13">{shapes.label}<text x="6.500" y="10" textAnchor="middle" fontSize="9" fontWeight="700" fontFamily="Noto Sans" fill="#444">T</text></svg></Period>
            {dropTool('arrows', 'Arrows')}
          </ToolGroup>
          <ToolGroup>
            {['M1', 'M5', 'M15', 'M30', 'H1', 'H4', 'D1', 'W1', 'MN'].map((p) => <Period key={p} $on={p === 'M15'}>{p}</Period>)}
          </ToolGroup>
        </ToolRow>
        <Workspace>
          <Chart
            title="XAUUSDm,M15"
            quote="XAUUSDm,M15  4795.729 4796.289 4787.427 4787.982"
            left={11}
            prices={goldPrices}
            last="4787.982"
            lastTop={178}
            price={goldPrice}
            priceExtras={
              <>
                <TrendPanel up="19%" down="81%" verdict="DOWN" strength="[strong]" tone="#fa0c0c" strengthTone="#b01c24" dashTone="#a01c20" />
                <Countdown $top={180}>&lt;--03:15</Countdown>
              </>
            }
            profit="0.0"
            pips="+5001.8"
            total="0.0"
            histoName="M15"
            histo={<Blocks from={11} runs={[['r', 20], ['o', 25.5], ['r', 28], ['o', 31], ['g', 36], ['o', 39], ['g', 42], ['o', 52.5], ['r', 61], ['g', 160], ['o', 165.5], ['r', 257], ['o', 286], ['r', 297], ['o', 308]]} />}
            values="-0.0888 -0.0888"
            wave={
              <>
                <Oscillator id="gold" pts={goldWave} zero={584} />
                <rect x="167" y="584" width="28" height="9" fill="#fe0000" />
                <path d="M187 642l3.500 5h6l3.500-5z" fill="#e81010" />
                <path d="M187 642l3.500 5h6l3.500-5" fill="none" stroke="#f7a83c" strokeWidth="1.300" />
              </>
            }
            waveExtras={<LikeSticker />}
            top="4.3045"
            bottom="-4.6842"
            zeroTop={61}
            dates={['17 Apr 2026', '17 Apr 10:30', '17 Apr 14:30', '17 Apr 18:30', '19 Apr 23:31', '20 Apr 03:30', '20 Apr 07:30']}
          />
          <Chart
            title="XAUUSDm,H1"
            quote="XAUUSDm,H1  4795.729 4796.289 4787.427 4787.982"
            folded
            left={436}
            prices={goldPrices}
            last="4787.982"
            lastTop={178}
            price={goldHourlyPrice}
            priceExtras={
              <>
                <LevelLabel $top={0}>61.8 4893.113</LevelLabel>
                <LevelLabel $top={58}>50.0- 4857.307</LevelLabel>
                <LevelLabel $top={116}>38.2- 4821.501</LevelLabel>
                <LevelLabel $top={174} $dim>23.6- 4785.696</LevelLabel>
                <LevelLabel $top={188}>23.6- 4777.200</LevelLabel>
                <LevelLabel $top={247} $dim>38.2- 4741.394</LevelLabel>
                <TradePanel onSubmit={(e) => e.preventDefault()}>
                  <TradeTop>
                    <SideButton type="button">SELL</SideButton>
                    <Volume>
                      <button type="button" aria-label="Decrease volume"><Caret /></button>
                      <input aria-label="Volume" defaultValue="1.00" />
                      <button type="button" aria-label="Increase volume"><UpCaret /></button>
                    </Volume>
                    <SideButton type="button">BUY</SideButton>
                  </TradeTop>
                  <Quote type="button">4787<big>98</big><sup>2</sup></Quote>
                  <Quote type="button">4788<big>37</big><sup>8</sup></Quote>
                </TradePanel>
              </>
            }
            profit="0.0"
            pips="+5001.8"
            total="0.0"
            histoName="H1"
            histo={<HourlyBlocks />}
            values="-1.0346 -1.0346"
            wave={<Oscillator id="hourly" pts={hourlyWave} zero={612.5} />}
            top="2.878"
            bottom="-1.2315"
            zeroTop={90}
            dates={['16 Apr 2026', '16 Apr 11:00', '16 Apr 19:00', '17 Apr 04:00', '17 Apr 12:00', '17 Apr 20:00', '20 Apr 05:00']}
          />
          <Chart
            title="BTCUSDm,M15"
            quote="BTCUSDm,M15  75057.01 75213.38 74969.88 75118.72"
            left={861}
            prices={['76399.20', '76174.80', '75950.40', '75719.20', '75494.80', '75270.40', '75039.20', '74814.80', '74590.40', '74359.20', '74134.80', '73910.40', '73686.00']}
            last="75118.72"
            lastTop={126}
            price={bitcoinPrice}
            priceExtras={
              <>
                <TrendPanel up="59%" down="41%" verdict="UP" strength="[weak]" tone="#2e8b57" strengthTone="#c07c34" dashTone="#35704a" />
                <Countdown $top={127}>&lt;--03:16</Countdown>
                <OrderNote $top={127}>#358571796 buy 1.00</OrderNote>
                <OrderNote $top={258}>#358571796 sl</OrderNote>
              </>
            }
            profit="+825.0"
            pips="-5277"
            total="13386.5"
            pipsOverlap
            histoName="M15"
            histo={<Blocks from={861} runs={[['r', 907.5], ['o', 910], ['r', 916], ['o', 918], ['g', 958.5], ['o', 966.5], ['r', 1106.5], ['o', 1114.5], ['g', 1117.5], ['o', 1133], ['g', 1157.5]]} />}
            values="31.4176 31.4176"
            wave={<Oscillator id="bitcoin" pts={bitcoinWave} zero={566.500} />}
            top="38.094"
            bottom="-71.1637"
            zeroTop={44}
            dates={['19 Apr 2026', '19 Apr 11:30', '19 Apr 15:30', '19 Apr 19:30', '19 Apr 23:30', '20 Apr 03:30', '20 Apr 07:30']}
          />
        </Workspace>
        <TabStrip />
      </AppWindow>
      <Banner><span>Trading is risky.Trade at your own discreation!!!!!!!!!!!</span></Banner>
    </Page>
  );
}
